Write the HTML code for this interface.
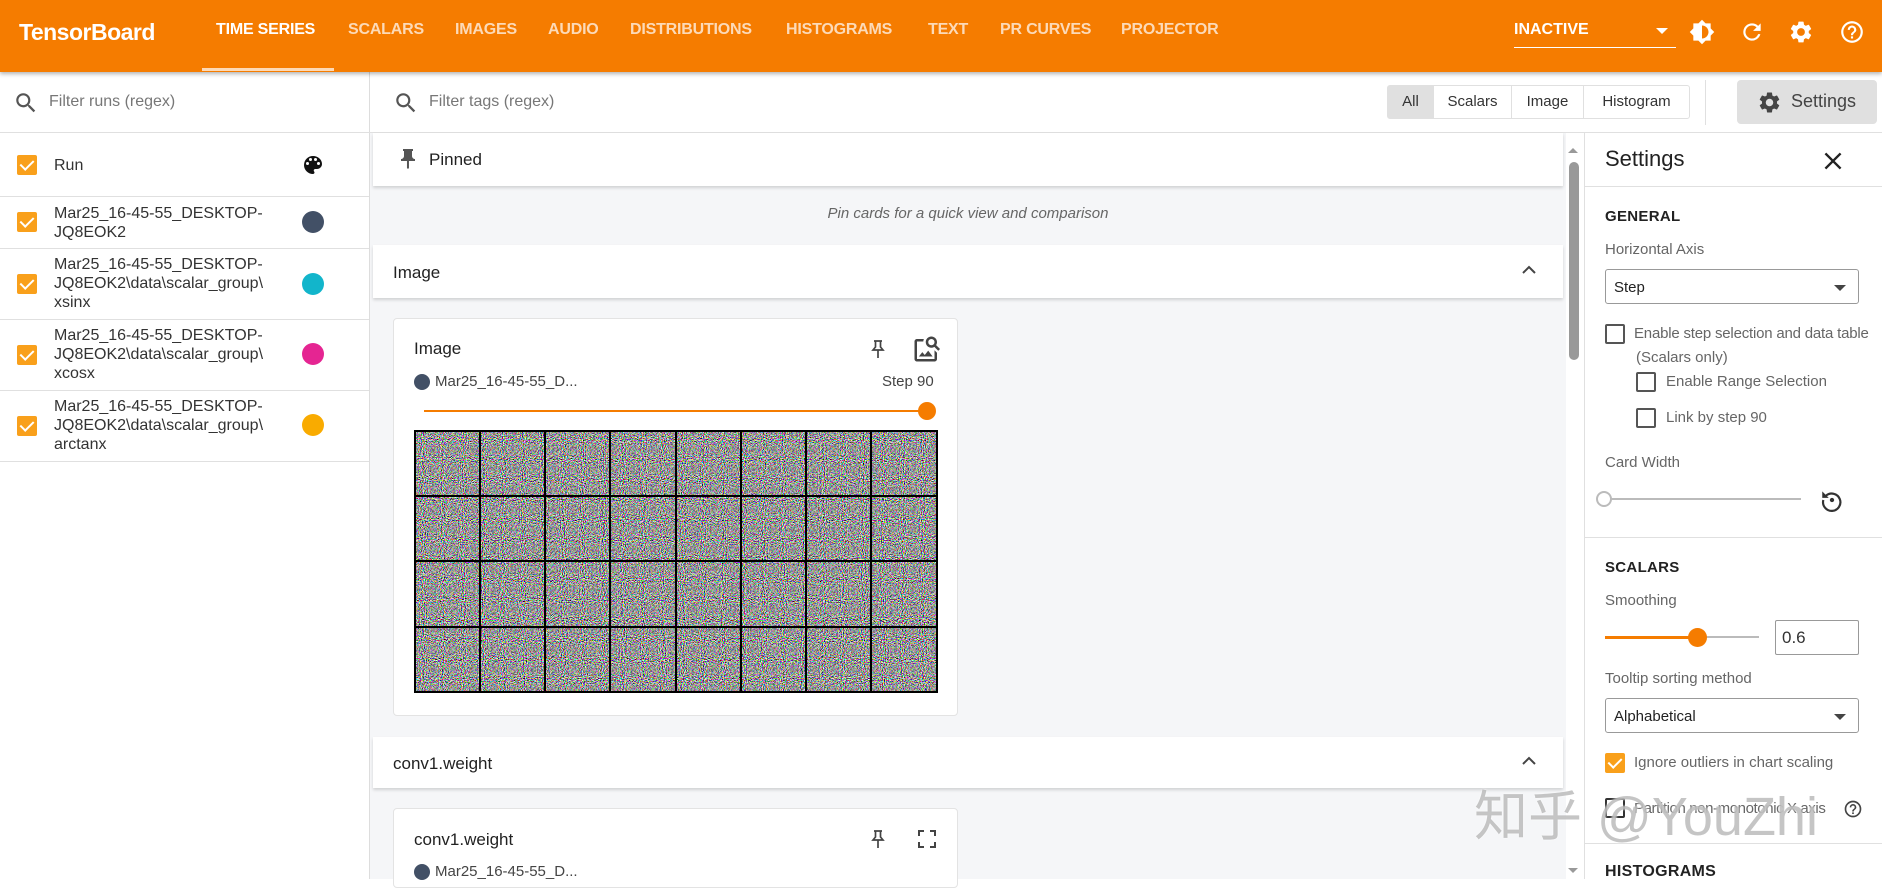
<!DOCTYPE html>
<html><head><meta charset="utf-8"><style>
*{box-sizing:border-box;margin:0;padding:0}
body{width:1882px;height:879px;overflow:hidden;position:relative;background:#fff;font-family:"Liberation Sans","Noto Sans CJK SC",sans-serif;color:#212121}
.a{position:absolute;white-space:nowrap}
.hdr{left:0;top:0;width:1882px;height:72px;background:#f57c00;box-shadow:0 2px 4px rgba(0,0,0,.3);z-index:5}
.tab{position:absolute;top:21px;font-size:16px;font-weight:bold;color:rgba(255,255,255,.72);letter-spacing:-0.2px}
.cb{position:absolute;width:20px;height:20px;background:#f9a01b;border-radius:2px}
.cb::after{content:"";position:absolute;left:6px;top:2px;width:6px;height:11px;border:solid #fff;border-width:0 2px 2px 0;transform:rotate(45deg)}
.cbo{position:absolute;width:20px;height:20px;border:2px solid #555;border-radius:2px}
.rt{position:absolute;left:54px;font-size:16px;line-height:19px;color:#333}
.dot{position:absolute;left:302px;width:22px;height:22px;border-radius:50%}
.hl{position:absolute;height:1px;background:#e0e0e0}
.lbl{position:absolute;font-size:15px;color:#666}
.sec{position:absolute;font-size:15px;font-weight:bold;color:#222;letter-spacing:.3px}
.sel{position:absolute;border:1px solid #999;border-radius:3px;font-size:15px;padding:9px 8px;color:#222}
.sel::after{content:"";position:absolute;right:12px;top:15px;border:6px solid transparent;border-top:6px solid #444}
</style></head><body>
<div class="a hdr">
 <div class="a" style="left:19px;top:19px;font-size:23px;font-weight:bold;color:#fff;letter-spacing:-0.5px">TensorBoard</div>
 <div class="tab" style="left:216px;color:#fff">TIME SERIES</div>
 <div class="a" style="left:202px;top:68px;width:132px;height:3px;background:#fdd9b5"></div>
 <div class="tab" style="left:348px">SCALARS</div>
 <div class="tab" style="left:455px">IMAGES</div>
 <div class="tab" style="left:548px">AUDIO</div>
 <div class="tab" style="left:630px">DISTRIBUTIONS</div>
 <div class="tab" style="left:786px">HISTOGRAMS</div>
 <div class="tab" style="left:928px">TEXT</div>
 <div class="tab" style="left:1000px">PR CURVES</div>
 <div class="tab" style="left:1121px">PROJECTOR</div>
 <div class="a" style="left:1514px;top:21px;font-size:16px;font-weight:bold;color:#fff">INACTIVE</div>
 <div class="a" style="left:1656px;top:28px;border:6px solid transparent;border-top:6px solid #fff"></div>
 <div class="a" style="left:1514px;top:47px;width:162px;height:1px;background:#fff"></div>
 <svg class="a" style="left:1689px;top:19px" width="26" height="26" viewBox="0 0 24 24"><path fill="#fff" d="M20 8.690V4h-4.690L12 .69 8.69 4H4v4.69L.69 12 4 15.31V20h4.69L12 23.31 15.31 20H20v-4.69L23.31 12 20 8.69zM12 18V6c3.31 0 6 2.69 6 6s-2.69 6-6 6z"/></svg>
 <svg class="a" style="left:1739px;top:19px" width="26" height="26" viewBox="0 0 24 24"><path fill="#fff" d="M17.65 6.35A7.960 7.960 0 0 0 12 4a8 8 0 1 0 7.73 10h-2.08A6 6 0 1 1 12 6c1.66 0 3.14.69 4.22 1.78L13 11h7V4l-2.35 2.35z"/></svg>
 <svg class="a" style="left:1788px;top:19px" width="26" height="26" viewBox="0 0 24 24"><path fill="#fff" d="M19.14 12.94a7.1 7.1 0 0 0 0-1.88l2.030-1.58a.5.5 0 0 0 .12-.61l-1.92-3.32a.5.5 0 0 0-.59-.22l-2.39.96a7 7 0 0 0-1.62-.94l-.36-2.54a.5.5 0 0 0-.49-.41h-3.84a.5.5 0 0 0-.48.41l-.36 2.54c-.59.24-1.13.57-1.62.94l-2.39-.96a.5.5 0 0 0-.59.22L2.71 8.87a.5.5 0 0 0 .12.61l2.03 1.58a7.1 7.1 0 0 0 0 1.88l-2.03 1.58a.5.5 0 0 0-.12.61l1.92 3.32c.12.22.37.29.59.22l2.39-.96c.5.38 1.03.7 1.62.94l.36 2.54c.05.24.24.41.48.41h3.84c.24 0 .44-.17.48-.41l.36-2.54c.59-.24 1.13-.56 1.62-.94l2.39.96c.22.08.47 0 .59-.22l1.92-3.32a.5.5 0 0 0-.12-.61l-2.01-1.58zM12 15.6a3.6 3.6 0 1 1 0-7.2 3.6 3.6 0 0 1 0 7.2z"/></svg>
 <svg class="a" style="left:1839px;top:19px" width="26" height="26" viewBox="0 0 24 24"><path fill="#fff" d="M11 18h2v-2h-2v2zm1-16a10 10 0 1 0 0 20 10 10 0 0 0 0-20zm0 18a8 8 0 1 1 0-16 8 8 0 0 1 0 16zm0-14a4 4 0 0 0-4 4h2a2 2 0 1 1 4 0c0 2-3 1.75-3 5h2c0-2.25 3-2.5 3-5a4 4 0 0 0-4-4z"/></svg>
</div>

<svg class="a" style="left:13px;top:90px" width="26" height="26" viewBox="0 0 24 24"><path fill="#555" d="M15.5 14h-.79l-.28-.27A6.47 6.47 0 0 0 16 9.5 6.5 6.5 0 1 0 9.5 16c1.61 0 3.090-.59 4.23-1.57l.27.28v.79l5 4.99L20.49 19l-4.99-5zm-6 0C7.01 14 5 11.99 5 9.5S7.01 5 9.5 5 14 7.01 14 9.5 11.99 14 9.5 14z"/></svg>
<div class="a" style="left:49px;top:93px;font-size:16px;color:#777">Filter runs (regex)</div>
<div class="a" style="left:369px;top:72px;width:1px;height:807px;background:#ddd"></div>
<svg class="a" style="left:393px;top:90px" width="26" height="26" viewBox="0 0 24 24"><path fill="#555" d="M15.5 14h-.79l-.28-.27A6.47 6.47 0 0 0 16 9.5 6.5 6.5 0 1 0 9.5 16c1.61 0 3.09-.59 4.23-1.57l.27.28v.79l5 4.99L20.49 19l-4.99-5zm-6 0C7.01 14 5 11.99 5 9.5S7.010 5 9.5 5 14 7.01 14 9.5 11.99 14 9.5 14z"/></svg>
<div class="a" style="left:429px;top:93px;font-size:16px;color:#777">Filter tags (regex)</div>
<div class="a" style="left:1387px;top:85px;width:303px;height:34px;border:1px solid #e0e0e0;border-radius:3px;font-size:15px;color:#333">
 <div class="a" style="left:0;top:0;width:45px;height:32px;background:#e0e0e0;text-align:center;line-height:32px">All</div>
 <div class="a" style="left:45px;top:0;width:78px;height:32px;border-left:1px solid #e0e0e0;text-align:center;line-height:32px">Scalars</div>
 <div class="a" style="left:123px;top:0;width:72px;height:32px;border-left:1px solid #e0e0e0;text-align:center;line-height:32px">Image</div>
 <div class="a" style="left:195px;top:0;width:106px;height:32px;border-left:1px solid #e0e0e0;text-align:center;line-height:32px">Histogram</div>
</div>
<div class="a" style="left:1705px;top:80px;width:1px;height:45px;background:#e0e0e0"></div>
<div class="a" style="left:1737px;top:80px;width:140px;height:44px;background:#e0e0e0;border-radius:4px;font-size:18px;color:#444">
 <svg class="a" style="left:20px;top:10px" width="25" height="25" viewBox="0 0 24 24"><path fill="#444" d="M19.14 12.94a7.1 7.1 0 0 0 0-1.88l2.03-1.58a.5.5 0 0 0 .12-.61l-1.92-3.32a.5.5 0 0 0-.59-.22l-2.39.96a7 7 0 0 0-1.62-.94l-.36-2.54a.5.5 0 0 0-.49-.41h-3.84a.5.5 0 0 0-.48.41l-.36 2.54c-.59.24-1.13.57-1.62.94l-2.39-.96a.5.5 0 0 0-.59.22L2.71 8.87a.5.5 0 0 0 .12.61l2.03 1.58a7.1 7.1 0 0 0 0 1.88l-2.03 1.58a.5.5 0 0 0-.12.61l1.92 3.32c.12.22.37.29.59.22l2.39-.96c.5.38 1.03.7 1.62.94l.36 2.54c.05.24.24.41.48.41h3.84c.24 0 .44-.17.48-.41l.36-2.54c.59-.24 1.13-.56 1.62-.94l2.39.96c.22.08.47 0 .59-.22l1.92-3.32a.5.5 0 0 0-.12-.61l-2.01-1.58zM12 15.6a3.6 3.6 0 1 1 0-7.2 3.6 3.6 0 0 1 0 7.2z"/></svg>
 <div class="a" style="left:54px;top:11px">Settings</div>
</div>
<div class="hl" style="left:0;top:132px;width:1882px"></div>

<div class="cb" style="left:17px;top:155px"></div>
<div class="rt" style="top:156px">Run</div>
<svg class="a" style="left:301px;top:153px" width="24" height="24" viewBox="0 0 24 24"><path fill="#111" d="M12 3a9 9 0 0 0 0 18c.83 0 1.5-.67 1.5-1.5 0-.39-.15-.74-.39-1.01-.23-.26-.38-.61-.38-.99 0-.83.67-1.5 1.5-1.5H16c2.76 0 5-2.24 5-5 0-4.42-4.03-8-9-8zm-5.5 9a1.5 1.5 0 1 1 0-3 1.5 1.5 0 0 1 0 3zm3-4a1.5 1.5 0 1 1 0-3 1.5 1.5 0 0 1 0 3zm5 0a1.5 1.5 0 1 1 0-3 1.5 1.5 0 0 1 0 3zm3 4a1.5 1.5 0 1 1 0-3 1.5 1.5 0 0 1 0 3z"/></svg>
<div class="hl" style="left:0;top:196px;width:369px"></div>
<div class="cb" style="left:17px;top:212px"></div>
<div class="rt" style="top:204px">Mar25_16-45-55_DESKTOP-<br>JQ8EOK2</div>
<div class="dot" style="top:211px;background:#425066"></div>
<div class="hl" style="left:0;top:248px;width:369px"></div>
<div class="cb" style="left:17px;top:274px"></div>
<div class="rt" style="top:255px">Mar25_16-45-55_DESKTOP-<br>JQ8EOK2\data\scalar_group\<br>xsinx</div>
<div class="dot" style="top:273px;background:#12b5cb"></div>
<div class="hl" style="left:0;top:319px;width:369px"></div>
<div class="cb" style="left:17px;top:345px"></div>
<div class="rt" style="top:326px">Mar25_16-45-55_DESKTOP-<br>JQ8EOK2\data\scalar_group\<br>xcosx</div>
<div class="dot" style="top:343px;background:#e52592"></div>
<div class="hl" style="left:0;top:390px;width:369px"></div>
<div class="cb" style="left:17px;top:416px"></div>
<div class="rt" style="top:397px">Mar25_16-45-55_DESKTOP-<br>JQ8EOK2\data\scalar_group\<br>arctanx</div>
<div class="dot" style="top:414px;background:#f9ab00"></div>
<div class="hl" style="left:0;top:461px;width:369px"></div>

<div class="a" style="left:370px;top:133px;width:1196px;height:746px;background:#f5f6f8"></div>
<div class="a" style="left:373px;top:133px;width:1190px;height:53px;background:#fff;box-shadow:0 2px 3px rgba(0,0,0,.15)"></div>
<svg class="a" style="left:396px;top:146px" width="24" height="26" viewBox="0 0 24 24"><path fill="#555" d="M16 9V4h1V2H7v2h1v5c0 1.66-1.34 3-3 3v2h5.97v7l1 1 1-1v-7H19v-2c-1.66 0-3-1.34-3-3z"/></svg>
<div class="a" style="left:429px;top:150px;font-size:17px;color:#222">Pinned</div>
<div class="a" style="left:370px;top:205px;width:1196px;text-align:center;font-size:15px;font-style:italic;color:#666">Pin cards for a quick view and comparison</div>
<div class="a" style="left:373px;top:245px;width:1190px;height:53px;background:#fff;box-shadow:0 2px 3px rgba(0,0,0,.15)"></div>
<div class="a" style="left:393px;top:263px;font-size:17px;color:#222">Image</div>
<svg class="a" style="left:1517px;top:258px" width="24" height="24" viewBox="0 0 24 24"><path fill="none" stroke="#444" stroke-width="2" d="M6 15l6-6 6 6"/></svg>
<div class="a" style="left:393px;top:318px;width:565px;height:398px;background:#fff;border:1px solid #e3e3e3;border-radius:4px"></div>
<div class="a" style="left:414px;top:339px;font-size:17px;color:#222">Image</div>
<svg class="a" style="left:866px;top:337px" width="24" height="24" viewBox="0 0 24 24"><path fill="none" stroke="#444" stroke-width="1.7" d="M8 4h8M9.5 4v6l-2.5 3h10l-2.5-3V4M12 13v8"/></svg>
<svg class="a" style="left:912px;top:334px" width="30" height="30" viewBox="0 0 24 24"><path fill="#444" d="M18 13v7H4V6h5.02c.05-.71.22-1.38.48-2H4c-1.1 0-2 .9-2 2v14c0 1.1.9 2 2 2h14c1.1 0 2-.9 2-2v-5l-2-2zm-1.5 5h-11l2.75-3.53 1.96 2.36 2.75-3.54L16.5 18zm2.8-9.11c.44-.7.7-1.51.7-2.39C20 4.01 17.99 2 15.5 2S11 4.01 11 6.5s2.01 4.5 4.49 4.5c.88 0 1.7-.26 2.39-.7L21 13.42 22.42 12 19.3 8.89zM15.5 9a2.5 2.5 0 0 1 0-5 2.5 2.5 0 0 1 0 5z"/></svg>
<div class="a" style="left:414px;top:374px;width:16px;height:16px;border-radius:50%;background:#425066"></div>
<div class="a" style="left:435px;top:373px;font-size:15px;color:#444">Mar25_16-45-55_D...</div>
<div class="a" style="left:882px;top:373px;font-size:15px;color:#444">Step 90</div>
<div class="a" style="left:424px;top:410px;width:503px;height:2px;background:#f57c00"></div>
<div class="a" style="left:918px;top:402px;width:18px;height:18px;border-radius:50%;background:#f57c00"></div>
<svg class="a" style="left:414px;top:430px" width="524" height="263">
 <filter id="n" x="0" y="0" width="100%" height="100%"><feTurbulence type="fractalNoise" baseFrequency="0.95" numOctaves="1" seed="3"/><feComponentTransfer><feFuncR type="linear" slope="4" intercept="-1.6"/><feFuncG type="linear" slope="4" intercept="-1.6"/><feFuncB type="linear" slope="4" intercept="-1.6"/><feFuncA type="linear" slope="0" intercept="1"/></feComponentTransfer></filter>
 <rect width="524" height="263" filter="url(#n)"/>
 <g stroke="#000" stroke-width="2">
  <line x1="1" y1="0" x2="1" y2="263"/><line x1="66" y1="0" x2="66" y2="263"/><line x1="131" y1="0" x2="131" y2="263"/><line x1="196" y1="0" x2="196" y2="263"/><line x1="262" y1="0" x2="262" y2="263"/><line x1="327" y1="0" x2="327" y2="263"/><line x1="392" y1="0" x2="392" y2="263"/><line x1="457" y1="0" x2="457" y2="263"/><line x1="523" y1="0" x2="523" y2="263"/>
  <line x1="0" y1="1" x2="524" y2="1"/><line x1="0" y1="66" x2="524" y2="66"/><line x1="0" y1="131" x2="524" y2="131"/><line x1="0" y1="197" x2="524" y2="197"/><line x1="0" y1="262" x2="524" y2="262"/>
 </g>
</svg>
<div class="a" style="left:373px;top:737px;width:1190px;height:51px;background:#fff;box-shadow:0 2px 3px rgba(0,0,0,.15)"></div>
<div class="a" style="left:393px;top:754px;font-size:17px;color:#222">conv1.weight</div>
<svg class="a" style="left:1517px;top:749px" width="24" height="24" viewBox="0 0 24 24"><path fill="none" stroke="#444" stroke-width="2" d="M6 15l6-6 6 6"/></svg>
<div class="a" style="left:393px;top:808px;width:565px;height:80px;background:#fff;border:1px solid #e3e3e3;border-radius:4px"></div>
<div class="a" style="left:414px;top:830px;font-size:17px;color:#222">conv1.weight</div>
<svg class="a" style="left:866px;top:827px" width="24" height="24" viewBox="0 0 24 24"><path fill="none" stroke="#444" stroke-width="1.7" d="M8 4h8M9.5 4v6l-2.5 3h10l-2.5-3V4M12 13v8"/></svg>
<svg class="a" style="left:915px;top:827px" width="24" height="24" viewBox="0 0 24 24"><path fill="none" stroke="#444" stroke-width="2" d="M4 9V4h5M15 4h5v5M20 15v5h-5M9 20H4v-5"/></svg>
<div class="a" style="left:414px;top:864px;width:16px;height:16px;border-radius:50%;background:#425066"></div>
<div class="a" style="left:435px;top:863px;font-size:15px;color:#444">Mar25_16-45-55_D...</div>

<div class="a" style="left:1566px;top:133px;width:18px;height:746px;background:#fff"></div>
<div class="a" style="left:1568px;top:143px;border:5px solid transparent;border-bottom:5px solid #999"></div>
<div class="a" style="left:1569px;top:162px;width:10px;height:198px;background:#999;border-radius:5px"></div>
<div class="a" style="left:1568px;top:868px;border:5px solid transparent;border-top:5px solid #999"></div>

<div class="a" style="left:1584px;top:133px;width:1px;height:746px;background:#e0e0e0"></div>
<div class="a" style="left:1605px;top:146px;font-size:22px;color:#222">Settings</div>
<svg class="a" style="left:1820px;top:148px" width="26" height="26" viewBox="0 0 24 24"><path stroke="#222" stroke-width="2.2" d="M5 5l14 14M19 5L5 19"/></svg>
<div class="hl" style="left:1585px;top:186px;width:297px"></div>
<div class="sec" style="left:1605px;top:208px">GENERAL</div>
<div class="lbl" style="left:1605px;top:241px">Horizontal Axis</div>
<div class="sel" style="left:1605px;top:269px;width:254px;height:35px">Step</div>
<div class="cbo" style="left:1605px;top:324px"></div>
<div class="lbl" style="left:1634px;top:325px;letter-spacing:-0.2px">Enable step selection and data table</div>
<div class="lbl" style="left:1636px;top:349px">(Scalars only)</div>
<div class="cbo" style="left:1636px;top:372px"></div>
<div class="lbl" style="left:1666px;top:373px">Enable Range Selection</div>
<div class="cbo" style="left:1636px;top:408px"></div>
<div class="lbl" style="left:1666px;top:409px">Link by step 90</div>
<div class="lbl" style="left:1605px;top:454px">Card Width</div>
<div class="a" style="left:1605px;top:498px;width:196px;height:2px;background:#bbb"></div>
<div class="a" style="left:1596px;top:491px;width:16px;height:16px;border-radius:50%;border:2px solid #bbb;background:#fff"></div>
<svg class="a" style="left:1819px;top:487px" width="26" height="26" viewBox="0 0 24 24"><path fill="none" stroke="#333" stroke-width="2" d="M6.5 8A8 8 0 1 1 4 12"/><path fill="#333" d="M3 4v6h6z"/><circle cx="12" cy="12" r="2" fill="#333"/></svg>
<div class="hl" style="left:1585px;top:537px;width:297px"></div>
<div class="sec" style="left:1605px;top:559px">SCALARS</div>
<div class="lbl" style="left:1605px;top:592px">Smoothing</div>
<div class="a" style="left:1605px;top:636px;width:92px;height:3px;background:#f57c00"></div>
<div class="a" style="left:1697px;top:636px;width:62px;height:2px;background:#bbb"></div>
<div class="a" style="left:1688px;top:628px;width:19px;height:19px;border-radius:50%;background:#f57c00"></div>
<div class="a" style="left:1775px;top:620px;width:84px;height:35px;border:1px solid #999;border-radius:2px;font-size:17px;color:#333;padding:7px 6px">0.6</div>
<div class="lbl" style="left:1605px;top:670px">Tooltip sorting method</div>
<div class="sel" style="left:1605px;top:698px;width:254px;height:35px">Alphabetical</div>
<div class="cb" style="left:1605px;top:753px"></div>
<div class="lbl" style="left:1634px;top:754px">Ignore outliers in chart scaling</div>
<div class="cbo" style="left:1605px;top:798px;border-color:#333"></div>
<div class="lbl" style="left:1634px;top:800px;letter-spacing:-0.4px">Partition non-monotonic X axis</div>
<svg class="a" style="left:1843px;top:799px" width="20" height="20" viewBox="0 0 24 24"><path fill="#444" d="M11 18h2v-2h-2v2zm1-16a10 10 0 1 0 0 20 10 10 0 0 0 0-20zm0 18a8 8 0 1 1 0-16 8 8 0 0 1 0 16zm0-14a4 4 0 0 0-4 4h2a2 2 0 1 1 4 0c0 2-3 1.75-3 5h2c0-2.25 3-2.5 3-5a4 4 0 0 0-4-4z"/></svg>
<div class="hl" style="left:1585px;top:843px;width:297px"></div>
<div class="sec" style="left:1605px;top:863px;font-size:16px">HISTOGRAMS</div>

<div class="a" style="left:1474px;top:772px;font-size:54px;color:rgba(150,150,150,.55);text-shadow:0 0 2px rgba(255,255,255,.9)">知乎 @YouZhi</div>
</body></html>
